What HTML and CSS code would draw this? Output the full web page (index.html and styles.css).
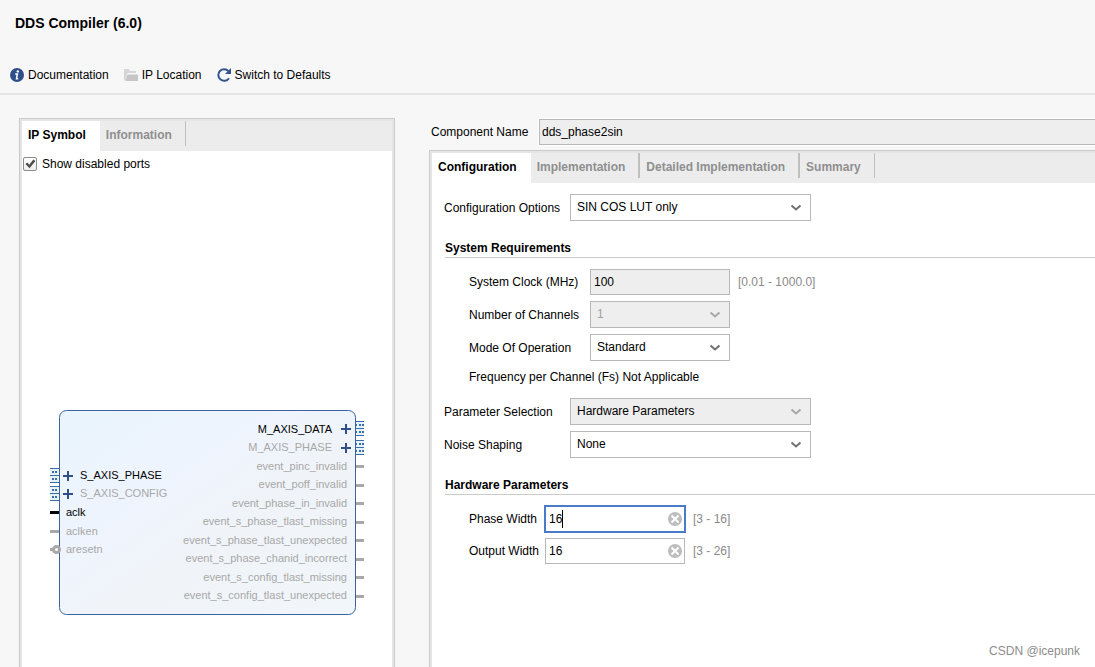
FILE: index.html
```html
<!DOCTYPE html>
<html lang="en">
<head>
    <meta charset="UTF-8">
    <meta name="viewport" content="width=device-width, initial-scale=1.0">
    <title>DDS Compiler (6.0)</title>
    <link rel="stylesheet" href="styles.css">
</head>
<body>

<header class="header">
    <h1>DDS Compiler (6.0)</h1>
    <div class="toolbar">
        <button type="button">
            <svg width="14" height="14" viewBox="0 0 14 14">
                <circle cx="7" cy="7" r="7" fill="#2f4f8b"/>
                <circle cx="7.8" cy="3.4" r="1.2" fill="#fff"/>
                <path d="M5.200 6h2.200L6.500 10.700h1.700" fill="none" stroke="#fff" stroke-width="1.5"/>
            </svg>
            Documentation
        </button>
        <button type="button">
            <svg width="14" height="14" viewBox="0 0 14 14">
                <path d="M0 1h5l1 2h6v2H3.500L1.500 12.500H0z" fill="#d6d6d6"/>
                <path d="M3.500 6.500H14V13H1.500z" fill="#c6c6c6"/>
            </svg>
            IP Location
        </button>
        <button type="button">
            <svg width="14" height="14" viewBox="0 0 14 14">
                <path d="M11.500 3.200A5.800 5.800 0 1 0 12 10.200" fill="none" stroke="#34548f" stroke-width="2"/>
                <path d="M14 0v6H8z" fill="#34548f"/>
            </svg>
            Switch to Defaults
        </button>
    </div>
</header>

<main class="workspace">
    <section class="panel symbol-panel">
        <nav class="tabs">
            <button type="button" class="tab active">IP Symbol</button>
            <button type="button" class="tab">Information</button>
        </nav>
        <label class="check">
            <input type="checkbox" checked>
            Show disabled ports
        </label>
        <svg class="symbol" width="314" height="206" viewBox="0 0 314 206">
            <defs>
                <linearGradient id="fill" x1="0" y1="0" x2="1" y2="1">
                    <stop offset="0" stop-color="#e9f4fd"/>
                    <stop offset="0.400" stop-color="#eff4fd"/>
                    <stop offset="0.600" stop-color="#f0f4f8"/>
                    <stop offset="1" stop-color="#f1f6fb"/>
                </linearGradient>
                <g id="bus-in">
                    <path d="M0 0h9v15H0z" fill="#e6f2fb"/>
                    <path d="M0 .5h9M0 7.500h9M0 14.500h9" stroke="#3a6ca6"/>
                    <path d="M2 4h2M5 4h2M2 11h2M5 11h2" stroke="#3a6ca6" stroke-width="2"/>
                </g>
                <g id="bus-out">
                    <path d="M0 0h8v15H0z" fill="#e6f2fb"/>
                    <path d="M0 .5h8M0 7.500h8M0 14.500h8" stroke="#3a6ca6"/>
                    <path d="M0 4h1M3 4h2M6 4h2M0 11h1M3 11h2M6 11h2" stroke="#3a6ca6" stroke-width="2"/>
                </g>
                <path id="plus" d="M0 5h10M5 0v10" stroke="#2f4f8b" stroke-width="2"/>
            </defs>
            <rect x="9.500" y="0.500" width="296" height="204" rx="7" fill="url(#fill)" stroke="#3c62a0"/>

            <!-- inputs -->
            <use href="#bus-in" x="0" y="58"/>
            <use href="#bus-in" x="0" y="76"/>
            <use href="#plus" x="13" y="61"/>
            <use href="#plus" x="13" y="79"/>
            <path d="M0 102.500h9" stroke="#000" stroke-width="3"/>
            <path d="M0 121.500h9M0 139.500h3" stroke="#a8a8a8" stroke-width="3"/>
            <circle cx="6.500" cy="139.500" r="3" fill="#fff" stroke="#a8a8a8" stroke-width="3"/>
            <text x="30" y="69" class="on">S_AXIS_PHASE</text>
            <text x="30" y="87">S_AXIS_CONFIG</text>
            <text x="16" y="106" class="on">aclk</text>
            <text x="16" y="125">aclken</text>
            <text x="16" y="143">aresetn</text>

            <!-- outputs -->
            <use href="#bus-out" x="306" y="11"/>
            <use href="#bus-out" x="306" y="30"/>
            <use href="#plus" x="291" y="14"/>
            <use href="#plus" x="291" y="33"/>
            <path d="M306 56.500h8M306 75.500h8M306 93.500h8M306 112.500h8M306 130.500h8M306 149.500h8M306 167.500h8M306 186.500h8" stroke="#a8a8a8" stroke-width="3"/>
            <g text-anchor="end">
                <text x="282" y="23" class="on">M_AXIS_DATA</text>
                <text x="282" y="41">M_AXIS_PHASE</text>
                <text x="297" y="60">event_pinc_invalid</text>
                <text x="297" y="78">event_poff_invalid</text>
                <text x="297" y="97">event_phase_in_invalid</text>
                <text x="297" y="115">event_s_phase_tlast_missing</text>
                <text x="297" y="134">event_s_phase_tlast_unexpected</text>
                <text x="297" y="152">event_s_phase_chanid_incorrect</text>
                <text x="297" y="171">event_s_config_tlast_missing</text>
                <text x="297" y="189">event_s_config_tlast_unexpected</text>
            </g>
        </svg>
    </section>

    <div class="settings">
        <div class="component">
            <label for="name">Component Name</label>
            <input type="text" id="name" value="dds_phase2sin" readonly>
        </div>

        <section class="panel">
            <nav class="tabs">
                <button type="button" class="tab active">Configuration</button>
                <button type="button" class="tab thick">Implementation</button>
                <button type="button" class="tab thick">Detailed Implementation</button>
                <button type="button" class="tab">Summary</button>
            </nav>
            <form class="form">
                <div class="row">
                    <label for="options">Configuration Options</label>
                    <div class="field wide">
                        <select id="options"><option>SIN COS LUT only</option></select>
                        <svg class="arrow" width="12" height="8" viewBox="0 0 12 8"><path d="M1.500 1.500L6 5.500l4.500-4"/></svg>
                    </div>
                </div>

                <h2>System Requirements</h2>
                <div class="group">
                    <div class="row">
                        <label for="clock">System Clock (MHz)</label>
                        <div class="field"><input type="text" id="clock" value="100" readonly></div>
                        <span class="range">[0.01 - 1000.0]</span>
                    </div>
                    <div class="row">
                        <label for="channels">Number of Channels</label>
                        <div class="field">
                            <select id="channels" class="dim" disabled><option>1</option></select>
                            <svg class="arrow" width="12" height="8" viewBox="0 0 12 8"><path d="M1.500 1.500L6 5.500l4.500-4"/></svg>
                        </div>
                    </div>
                    <div class="row">
                        <label for="mode">Mode Of Operation</label>
                        <div class="field">
                            <select id="mode"><option>Standard</option></select>
                            <svg class="arrow" width="12" height="8" viewBox="0 0 12 8"><path d="M1.500 1.500L6 5.500l4.500-4"/></svg>
                        </div>
                    </div>
                    <p>Frequency per Channel (Fs) Not Applicable</p>
                </div>

                <div class="row">
                    <label for="selection">Parameter Selection</label>
                    <div class="field wide">
                        <select id="selection" disabled><option>Hardware Parameters</option></select>
                        <svg class="arrow" width="12" height="8" viewBox="0 0 12 8"><path d="M1.500 1.500L6 5.500l4.500-4"/></svg>
                    </div>
                </div>
                <div class="row">
                    <label for="noise">Noise Shaping</label>
                    <div class="field wide">
                        <select id="noise"><option>None</option></select>
                        <svg class="arrow" width="12" height="8" viewBox="0 0 12 8"><path d="M1.500 1.500L6 5.500l4.500-4"/></svg>
                    </div>
                </div>

                <h2>Hardware Parameters</h2>
                <div class="group narrow">
                    <div class="row">
                        <label for="phase">Phase Width</label>
                        <div class="field">
                            <input type="text" id="phase" class="focused" value="16">
                            <span class="caret"></span>
                            <button type="button" class="clear" aria-label="Clear">
                                <svg width="14" height="14" viewBox="0 0 14 14"><circle cx="7" cy="7" r="7" fill="#bdbdbd"/><path d="M3.500 3.500l7 7M10.500 3.500l-7 7" stroke="#fff" stroke-width="2"/></svg>
                            </button>
                        </div>
                        <span class="range">[3 - 16]</span>
                    </div>
                    <div class="row">
                        <label for="output">Output Width</label>
                        <div class="field">
                            <input type="text" id="output" value="16">
                            <button type="button" class="clear" aria-label="Clear">
                                <svg width="14" height="14" viewBox="0 0 14 14"><circle cx="7" cy="7" r="7" fill="#bdbdbd"/><path d="M3.500 3.500l7 7M10.500 3.500l-7 7" stroke="#fff" stroke-width="2"/></svg>
                            </button>
                        </div>
                        <span class="range">[3 - 26]</span>
                    </div>
                </div>
            </form>
        </section>
    </div>
</main>

<div class="watermark">CSDN @icepunk</div>

</body>
</html>
```
FILE: styles.css
```css
* {
    box-sizing: border-box;
}
body {
    display: flex;
    flex-direction: column;
    height: 100vh;
    margin: 0;
    overflow: hidden;
    background: #f7f7f7;
    color: #000;
    font-family: "Liberation Sans", Arial, sans-serif;
    font-size: 12px;
    line-height: 18px;
}
button, input, select {
    margin: 0;
    font: inherit;
    color: inherit;
}
button {
    padding: 0;
    border: none;
    background: none;
}
svg {
    display: block;
}

.header {
    padding: 13px 10px 9px;
    border-bottom: 2px solid #e5e5e5;
}
h1 {
    margin: 0 0 33px 5px;
    font-size: 14px;
    line-height: 20px;
}
.toolbar {
    display: flex;
    gap: 15px;
}
.toolbar button {
    display: flex;
    align-items: center;
    gap: 4px;
}

.workspace {
    display: flex;
    flex: 1;
    gap: 34px;
    min-height: 0;
    padding: 23px 0 0 19px;
}
.panel {
    border: 1px solid #cacaca;
    border-bottom: none;
    background: #fff;
    box-shadow: inset 2px 2px #e5e5e5;
    padding: 2px 2px 0;
}
.symbol-panel {
    flex: 0 0 376px;
    box-shadow: inset 2px 2px #e5e5e5, inset -2px 0 #e5e5e5;
}
.tabs {
    display: flex;
    height: 30px;
    background: #ececec;
}
.tab {
    height: 25px;
    padding: 2px 13px 0 6px;
    border-right: 1px solid #bfbfbf;
    color: #8f8f8f;
    font-weight: bold;
}
.tab.thick {
    border-right-width: 2px;
}
.tab.active {
    height: 30px;
    padding-bottom: 5px;
    border-right-color: #fff;
    background: #fff;
    color: #000;
}
.check {
    display: flex;
    align-items: center;
    gap: 5px;
    padding: 4px 1px;
}
.check input {
    appearance: none;
    width: 14px;
    height: 14px;
    border: 1px solid #8c8c8c;
    border-radius: 2px;
    background: #fff;
}
.check input:checked {
    background: linear-gradient(#fff, #eee);
}
.check input:checked::before {
    content: "";
    display: block;
    width: 12px;
    height: 12px;
    background: #4d4d4d;
    clip-path: polygon(12% 50%, 28% 38%, 43% 56%, 78% 12%, 95% 24%, 46% 86%);
}
.symbol {
    margin: 233px auto 0;
}
.symbol text {
    fill: #a8a8a8;
    font-size: 11px;
}
.symbol .on {
    fill: #000;
}

.settings {
    display: flex;
    flex: 1;
    flex-direction: column;
    gap: 5px;
    min-width: 0;
    padding-top: 1px;
}
.settings .panel {
    flex: 1;
    border-right: none;
    padding-right: 0;
}
.component {
    display: flex;
    align-items: center;
    padding-left: 2px;
}
.component label {
    flex: 0 0 108px;
}

input[type="text"], select {
    width: 100%;
    height: 26px;
    padding: 0 3px;
    border: 1px solid #b8b8b8;
    border-radius: 0;
    outline: none;
    background: #fff;
}
input[type="text"][readonly] {
    background: #eee;
}
.component input[type="text"] {
    flex: 1;
    padding: 0 2px;
    border-right: none;
    box-shadow: 0 0 0 1px #fff;
}
select {
    display: block;
    appearance: none;
    height: 27px;
    padding: 0 6px 2px;
}
select:disabled {
    background: #eee;
    color: #000;
    opacity: 1;
}
select.dim:disabled {
    color: #a0a0a0;
}
.form {
    display: flex;
    flex-direction: column;
    gap: 6px;
    padding: 11px 0 0 12px;
}
.row {
    display: flex;
    align-items: center;
}
.row label {
    flex: 0 0 126px;
}
.field {
    position: relative;
    display: flex;
    width: 140px;
}
.field.wide {
    width: 241px;
}
.arrow {
    position: absolute;
    right: 9px;
    top: 10px;
    fill: none;
    stroke: #707070;
    stroke-width: 2;
}
select:disabled + .arrow {
    stroke: #a8a8a8;
}
h2 {
    margin: 12px 0 5px 1px;
    border-bottom: 1px solid #cbcbcb;
    font-size: 12px;
    line-height: 18px;
}
.group {
    display: flex;
    flex-direction: column;
    gap: 6px;
    margin-bottom: 5px;
    padding-left: 25px;
}
.group .row label {
    flex-basis: 121px;
}
.group.narrow .row label {
    flex-basis: 76px;
}
.group p {
    margin: 0;
    line-height: 20px;
}
.range {
    margin-left: 8px;
    color: #8a8a8a;
}
input[type="text"].focused {
    border-color: #4a7bc8;
    box-shadow: 0 0 0 1px #4a7bc8;
}
.caret {
    position: absolute;
    left: 17px;
    top: 4px;
    width: 1px;
    height: 18px;
    background: #000;
}
.clear {
    position: absolute;
    right: 3px;
    top: 6px;
}

.watermark {
    position: absolute;
    right: 15px;
    bottom: 7px;
    color: #8c8c8c;
}
```
